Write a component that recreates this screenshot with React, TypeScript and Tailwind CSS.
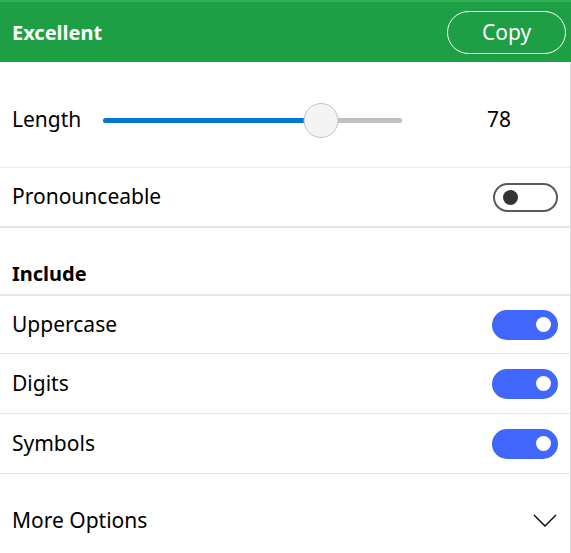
const font = { fontFamily: '"Segoe UI", "Noto Sans", "Open Sans", sans-serif' }

function Toggle({ on }: { on: boolean }) {
  if (on) {
    return (
      <div className="flex h-[30px] w-[66px] items-center justify-end rounded-full bg-[#4066fb] pr-[7px]">
        <div className="h-[15px] w-[15px] rounded-full bg-white" />
      </div>
    )
  }
  return (
    <div className="flex h-[29px] w-[65px] items-center rounded-full border-2 border-[#5a5a5a] pl-[8px]">
      <div className="h-[15px] w-[15px] rounded-full bg-[#333333]" />
    </div>
  )
}

function Row({ label, on, height }: { label: string; on: boolean; height: string }) {
  return (
    <div className={`flex ${height} items-center justify-between border-b border-[#e6e6e6] pl-3 pr-3`}>
      <span className="text-[21px] text-black">{label}</span>
      <Toggle on={on} />
    </div>
  )
}

export default function App() {
  const value = 78
  const pct = 73

  return (
    <div className="h-[553px] w-[571px] overflow-hidden bg-white" style={font}>
      <div className="flex h-[62px] items-center justify-between border-t-2 border-[#2eb053] bg-[#1e9f45] pl-3 pr-[5px]">
        <span className="pt-[1px] text-[20px] font-bold text-white">Excellent</span>
        <button className="flex h-[43px] w-[119px] items-center justify-center rounded-full border border-white pt-[1px] text-[21px] text-white">
          Copy
        </button>
      </div>

      <div className="border-r border-[#d9d9d9]">
        <div className="flex h-[106px] items-center border-b border-[#ececec] pl-3 pt-[10px]">
          <span className="w-[91px] text-[21px] text-black">Length</span>
          <div className="relative h-[34px] w-[299px]">
            <div className="absolute left-0 right-0 top-[15px] h-[5px] rounded-full bg-[#c0c0c0]" />
            <div className="absolute left-0 top-[15px] h-[5px] rounded-full bg-[#0078d4]" style={{ width: `${pct}%` }} />
            <div
              className="absolute top-0 h-[35px] w-[35px] -translate-x-1/2 rounded-full border-[1.5px] border-[#c4c4c4] bg-[#f4f4f4]"
              style={{ left: `${pct}%` }}
            />
          </div>
          <span className="ml-[85px] text-[21px] text-black">{value}</span>
        </div>

        <div className="flex h-[60px] items-center justify-between border-b-2 border-[#e6e6e6] pl-3 pr-3">
          <span className="text-[21px] text-black">Pronounceable</span>
          <Toggle on={false} />
        </div>

        <div className="flex h-[68px] items-end border-b-2 border-[#e6e6e6] pb-[5px] pl-3">
          <span className="text-[20px] font-bold text-black">Include</span>
        </div>

        <Row label="Uppercase" on height="h-[58px]" />
        <Row label="Digits" on height="h-[60px]" />
        <Row label="Symbols" on height="h-[60px]" />

        <div className="flex h-[94px] items-center justify-between pl-3 pr-[12px]">
          <span className="text-[21px] text-black">More Options</span>
          <svg width="24" height="14" viewBox="0 0 24 14" fill="none" className="mr-[1px]">
            <polyline points="1,1 12,12 23,1" stroke="#000" strokeWidth="1.4" />
          </svg>
        </div>
      </div>
    </div>
  )
}
